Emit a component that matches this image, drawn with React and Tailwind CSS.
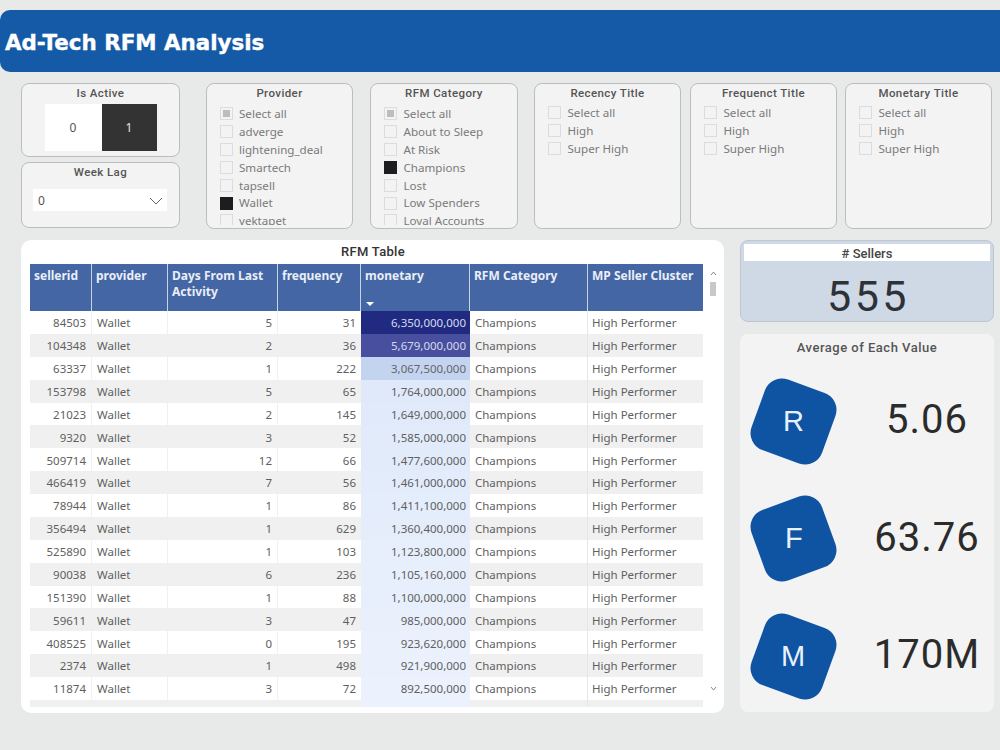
const rows = [
  ["84503", "5", "31", "6,350,000,000", "bg-[#1f2a80] text-[#d5d9ee]"],
  ["104348", "2", "36", "5,679,000,000", "bg-[#474f9e] text-[#d5d9ee]"],
  ["63337", "1", "222", "3,067,500,000", "bg-[#c3d4f0] text-[#666666]"],
  ["153798", "5", "65", "1,764,000,000", "bg-[#dfe9fa] text-[#5f5f5f]"],
  ["21023", "2", "145", "1,649,000,000", "bg-[#e0eafa] text-[#5f5f5f]"],
  ["9320", "3", "52", "1,585,000,000", "bg-[#e1ebfa] text-[#5f5f5f]"],
  ["509714", "12", "66", "1,477,600,000", "bg-[#e2ebfa] text-[#5f5f5f]"],
  ["466419", "7", "56", "1,461,000,000", "bg-[#e3ecfb] text-[#5f5f5f]"],
  ["78944", "1", "86", "1,411,100,000", "bg-[#e4edfb] text-[#5f5f5f]"],
  ["356494", "1", "629", "1,360,400,000", "bg-[#e5edfb] text-[#5f5f5f]"],
  ["525890", "1", "103", "1,123,800,000", "bg-[#e7effc] text-[#5f5f5f]"],
  ["90038", "6", "236", "1,105,160,000", "bg-[#e8effc] text-[#5f5f5f]"],
  ["151390", "1", "88", "1,100,000,000", "bg-[#e8effc] text-[#5f5f5f]"],
  ["59611", "3", "47", "985,000,000", "bg-[#e9f0fc] text-[#5f5f5f]"],
  ["408525", "0", "195", "923,620,000", "bg-[#eaf1fc] text-[#5f5f5f]"],
  ["2374", "1", "498", "921,900,000", "bg-[#eaf1fc] text-[#5f5f5f]"],
  ["11874", "3", "72", "892,500,000", "bg-[#ebf1fd] text-[#5f5f5f]"],
  ["7421", "2", "41", "887,000,000", "bg-[#ebf1fd] text-[#5f5f5f]"],
];

const titleClass = "text-center text-[11.5px] leading-[16px] font-medium tracking-[0.4px] text-[#555555] font-['Roboto',sans-serif]";

function Slicer({ title, items, width, className = "", inner = "pl-[13px]" }) {
  return (
    <div className={`${width} ${className} h-[146px] rounded-lg border border-[#bdbdbd] bg-[#f3f3f3] overflow-hidden`}>
      <div className={`pt-[1px] h-[20px] ${titleClass}`}>{title}</div>
      <div className={`h-[121px] overflow-hidden ${inner}`}>
        {items.map(([label, state]) => (
          <div key={label} className="flex items-center h-[17.83px] gap-[6.5px] text-[11.6px] text-[#7a7a7a] font-['Noto_Sans',sans-serif] whitespace-nowrap">
            <span className={`w-[13px] h-[13px] shrink-0 border flex items-center justify-center ${state === "on" ? "bg-[#1d1d1f] border-[#1d1d1f]" : "bg-[#f3f3f3] border-[#dcdcdc]"}`}>
              {state === "partial" && <span className="w-[7px] h-[7px] bg-[#bdbdbd]" />}
            </span>
            {label}
          </div>
        ))}
      </div>
    </div>
  );
}

const high = [["Select all"], ["High"], ["Super High"]];
const cols = ["w-[62px]", "w-[76px]", "w-[110px]", "w-[83px]", "w-[109px]", "w-[118px]", "w-[115px]"];

function Letter({ rotate, children }) {
  return (
    <div className={`w-[75px] h-[75px] rounded-[18px] bg-[#0f54a3] flex items-center justify-center ${rotate}`}>
      <span className={`text-[29px] text-[#e8f2fb] font-['Liberation_Sans',sans-serif] ${rotate === "rotate-[20deg]" ? "-rotate-[20deg]" : "rotate-[20deg]"}`}>{children}</span>
    </div>
  );
}

function Metric({ rotate, letter, value }) {
  return (
    <div className="flex items-center h-[80px]">
      <div className="w-[122px] pl-[15.5px] flex"><Letter rotate={rotate}>{letter}</Letter></div>
      <div className="w-[130px] pb-[2px] text-center text-[40px] leading-none tracking-[1px] text-[#2b2b2b] font-['Roboto',sans-serif]">{value}</div>
    </div>
  );
}

export default function App() {
  return (
    <div className="w-[1000px] h-[750px] overflow-hidden bg-[#e8e9e9] pt-[10px] flex flex-col">
      <div className="h-[62px] shrink-0 rounded-l-[10px] bg-[#155aa6] flex items-center pl-[5px] pt-[4px] text-[21.4px] font-bold text-white [-webkit-text-stroke:0.4px_white] font-['DejaVu_Sans',sans-serif]">
        Ad-Tech RFM Analysis
      </div>

      <div className="mt-[11px] pl-[21px] flex items-start">
        <div className="w-[159px] flex flex-col gap-[5px]">
          <div className="h-[74px] rounded-lg border border-[#bdbdbd] bg-[#f3f3f3]">
            <div className={`pt-[1px] h-[20px] ${titleClass}`}>Is Active</div>
            <div className="flex justify-center text-[12px] font-['Noto_Sans',sans-serif]">
              <div className="w-[57px] h-[47px] bg-white text-[#555555] flex items-center justify-center">0</div>
              <div className="w-[55px] h-[47px] bg-[#333333] text-[#e5e5e5] flex items-center justify-center">1</div>
            </div>
          </div>
          <div className="h-[66px] rounded-lg border border-[#bdbdbd] bg-[#f3f3f3]">
            <div className={`pt-[1px] h-[26px] ${titleClass}`}>Week Lag</div>
            <div className="ml-[11px] w-[134px] h-[22px] bg-white flex items-center justify-between pl-[5px] pr-[4px] pt-[1px] text-[12px] text-[#555555] font-['Noto_Sans',sans-serif]">
              0
              <svg width="14" height="8" viewBox="0 0 14 8" fill="none" stroke="#666666" strokeWidth="1"><path d="M1 1l6 6 6-6" /></svg>
            </div>
          </div>
        </div>
        <Slicer className="ml-[26px]" width="w-[147px]" inner="pl-[12.5px] pt-[1px]" title="Provider" items={[["Select all", "partial"], ["adverge"], ["lightening_deal"], ["Smartech"], ["tapsell"], ["Wallet", "on"], ["vektapet"]]} />
        <Slicer className="ml-[17px]" width="w-[148px]" inner="pl-[13px] pt-[1px]" title="RFM Category" items={[["Select all", "partial"], ["About to Sleep"], ["At Risk"], ["Champions", "on"], ["Lost"], ["Low Spenders"], ["Loyal Accounts"]]} />
        <Slicer className="ml-[16px]" width="w-[147px]" title="Recency Title" items={high} />
        <Slicer className="ml-[9px]" width="w-[147px]" title="Frequenct Title" items={high} />
        <Slicer className="ml-[8px]" width="w-[147px]" title="Monetary Title" items={high} />
      </div>

      <div className="mt-[11px] pl-[21px] flex items-start">
        <div className="w-[703px] h-[473px] rounded-[10px] bg-white pl-[9px] flex flex-col">
          <div className="h-[24px] pr-[8px] pt-[4px] text-center text-[13px] leading-[16px] font-medium tracking-[0.3px] text-[#333333] font-['Roboto',sans-serif]">RFM Table</div>
          <div className="flex">
            <div className="w-[673px] h-[443px] overflow-hidden">
              <div className="flex h-[47px] bg-[#4566a4] text-[12px] leading-[16px] font-bold text-[#e9eef7] font-['Noto_Sans',sans-serif]">
                {["sellerid", "provider", "Days From Last Activity", "frequency", "monetary", "RFM Category", "MP Seller Cluster"].map((h, i) => (
                  <div key={h} className={`${cols[i]} relative border-r border-[#c9d3e6] pl-[4px] pr-[2px] pt-[4px] last:border-r-0`}>
                    {h}
                    {h === "monetary" && <span className="absolute left-[5px] bottom-[5px] w-0 h-0 border-x-[4px] border-x-transparent border-t-[4px] border-t-white" />}
                  </div>
                ))}
              </div>
              {rows.map((r, i) => (
                <div key={r[0]} className={`flex h-[22.875px] items-center text-[11.5px] text-[#5f5f5f] font-['Noto_Sans',sans-serif] ${i % 2 ? "bg-[#f0f0f0]" : "bg-white"}`}>
                  <div className={`${cols[0]} h-full flex items-center justify-end pr-[5px] pt-[1px] border-r border-[#f0f0f0]`}>{r[0]}</div>
                  <div className={`${cols[1]} h-full flex items-center pl-[5px] pt-[1px] border-r border-[#f0f0f0]`}>Wallet</div>
                  <div className={`${cols[2]} h-full flex items-center justify-end pr-[5px] pt-[1px] border-r border-[#f0f0f0]`}>{r[1]}</div>
                  <div className={`${cols[3]} h-full flex items-center justify-end pr-[5px] pt-[1px]`}>{r[2]}</div>
                  <div className={`${cols[4]} ${r[4]} h-full flex items-center justify-end pr-[4px] pt-[1px]`}>{r[3]}</div>
                  <div className={`${cols[5]} h-full flex items-center pl-[5px] pt-[1px] border-r border-[#e6e6e6]`}>Champions</div>
                  <div className={`${cols[6]} h-full flex items-center pl-[4px] pt-[1px]`}>High Performer</div>
                </div>
              ))}
            </div>
            <div className="w-[20px] h-[443px] flex flex-col items-center text-[#888888]">
              <svg className="mt-[7px]" width="7" height="5" viewBox="0 0 7 5" fill="none" stroke="#888888"><path d="M1 4l2.5-3L6 4" /></svg>
              <div className="mt-[6px] w-[6px] h-[14px] bg-[#c8c8c8]" />
              <svg className="mt-[390px]" width="7" height="5" viewBox="0 0 7 5" fill="none" stroke="#888888"><path d="M1 1l2.5 3L6 1" /></svg>
            </div>
          </div>
        </div>

        <div className="ml-[16px] w-[254px] flex flex-col gap-[12px]">
          <div className="h-[82px] rounded-lg border border-[#bcc6d3] bg-[#cfd9e6] px-[3px] pt-[3px]">
            <div className="h-[17px] pt-[1px] bg-white text-center text-[13px] leading-[17px] font-medium text-[#444444] font-['Roboto',sans-serif]"># Sellers</div>
            <div className="mt-[7px] pl-[3px] text-center text-[43px] leading-[56px] tracking-[3.5px] text-[#2e3138] font-['Roboto',sans-serif]">555</div>
          </div>
          <div className="h-[378px] rounded-lg bg-[#f3f3f3]">
            <div className="h-[47px] pt-[6px] text-center text-[13px] leading-[16px] tracking-[0.5px] text-[#555555] font-medium font-['Roboto',sans-serif]">Average of Each Value</div>
            <div className="flex flex-col gap-[37.5px]">
              <Metric rotate="rotate-[20deg]" letter="R" value="5.06" />
              <Metric rotate="-rotate-[20deg]" letter="F" value="63.76" />
              <Metric rotate="rotate-[20deg]" letter="M" value="170M" />
            </div>
          </div>
        </div>
      </div>
    </div>
  );
}
